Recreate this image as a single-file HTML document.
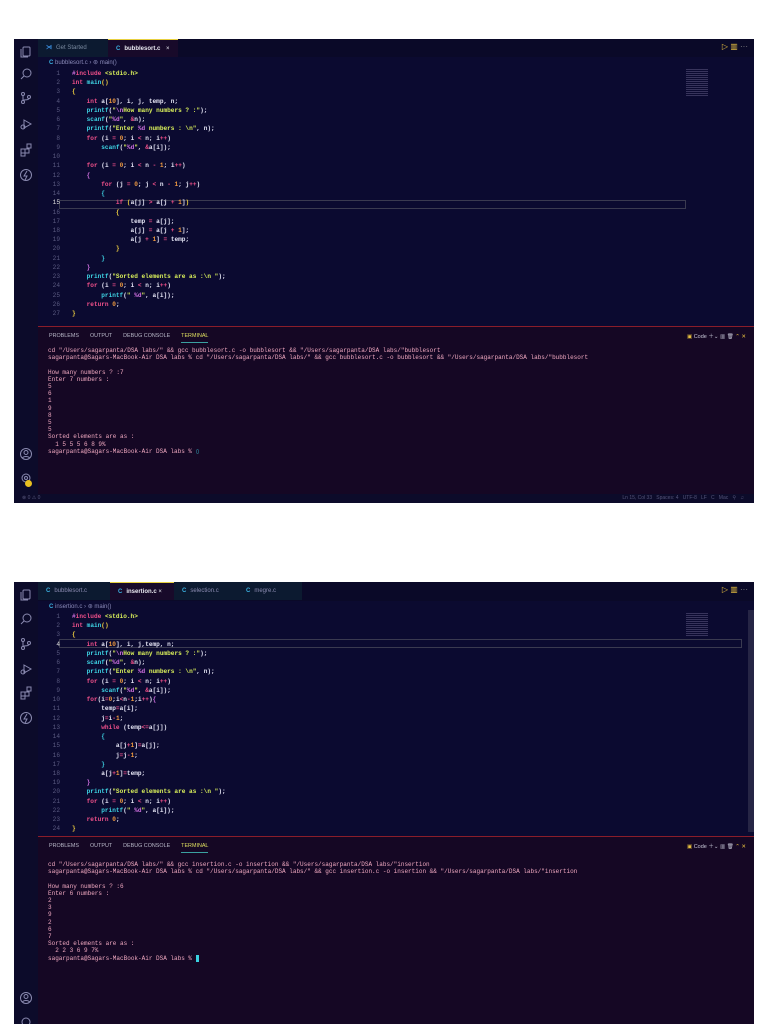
<!DOCTYPE html>
<html><head><meta charset="utf-8"><style>
*{margin:0;padding:0;box-sizing:border-box}
body{width:768px;height:1024px;background:#fff;position:relative;overflow:hidden;font-family:"Liberation Sans",sans-serif}
.win{position:absolute;left:14px;width:740px;background:#0b0a30;overflow:hidden}
.act{position:absolute;left:0;top:0;width:24px;bottom:0;background:#0c0b2a}
.act svg{position:absolute;left:5px}
.tabs{position:absolute;left:24px;right:0;top:0;height:18px;background:#0a0928}
.tab{position:absolute;top:0;height:18px;font-size:6px;color:#8a8ab0;line-height:18px;padding-left:8px}
.tab b{color:#3ab0e0;font-weight:bold;margin-right:4px}
.crumb{position:absolute;left:35px;font-size:6px;color:#8a8ab8}
pre{font-family:"Liberation Mono",monospace;font-size:6.1px;position:absolute;white-space:pre}
.ln{color:#5a5a80;text-align:right;width:22px;left:24px;line-height:9.23px}
.code{left:58px;color:#e4e4f4;line-height:9.23px;font-weight:bold}
.k{color:#f0508a}.f{color:#3ed4e4}.s{color:#d8ee5a}.n{color:#f09a40}.y{color:#f0d040}.p{color:#d070e0}
.term{position:absolute;left:24px;right:0;background:#150724;border-top:1.5px solid #8a1d2a}
.ttabs{position:absolute;left:11px;top:6px;font-size:5.4px;color:#b8b8c8}
.ttabs span{margin-right:11px}
.tt{color:#e0e060;border-bottom:1px solid #3aa0a0;padding-bottom:3px}
.tout{left:10px;color:#f0a8c0;font-size:6px;line-height:7.2px}
.tr{position:absolute;right:8px;top:5px;font-size:5.5px;color:#c8c8d8}
.status{position:absolute;left:0;right:0;height:9px;background:#0c0b2a;font-size:5px;color:#55557a;line-height:9px}
</style></head><body>

<!-- Window 1 -->
<div class="win" style="top:39px;height:464px">
 <div class="act">
  <svg style="top:6px" width="14" height="14" viewBox="0 0 14 14" fill="none" stroke="#8a8ab0" stroke-width="1"><rect x="4" y="2" width="7" height="9" rx="1"/><path d="M2 4v8h7"/></svg>
  <svg style="top:28px" width="14" height="14" viewBox="0 0 14 14" fill="none" stroke="#8a8ab0" stroke-width="1"><circle cx="8" cy="6" r="4"/><path d="M5 9l-3 3"/></svg>
  <svg style="top:52px" width="14" height="14" viewBox="0 0 14 14" fill="none" stroke="#8a8ab0" stroke-width="1"><circle cx="4" cy="3" r="1.5"/><circle cx="4" cy="11" r="1.5"/><circle cx="10" cy="6" r="1.5"/><path d="M4 4.5v5M10 7.5c0 2-6 1-6 2"/></svg>
  <svg style="top:78px" width="14" height="14" viewBox="0 0 14 14" fill="none" stroke="#8a8ab0" stroke-width="1"><path d="M5 3l7 4-7 4z"/><circle cx="4" cy="10" r="2"/></svg>
  <svg style="top:104px" width="14" height="14" viewBox="0 0 14 14" fill="none" stroke="#8a8ab0" stroke-width="1"><rect x="2" y="6" width="4" height="4"/><rect x="6" y="6" width="4" height="4"/><rect x="2" y="10" width="4" height="3"/><rect x="8" y="1" width="4" height="4"/></svg>
  <svg style="top:129px" width="14" height="14" viewBox="0 0 14 14" fill="none" stroke="#8a8ab0" stroke-width="1"><circle cx="7" cy="7" r="5.5"/><path d="M8 3L5 8h3l-2 4"/></svg>
  <svg style="top:408px" width="14" height="14" viewBox="0 0 14 14" fill="none" stroke="#8a8ab0" stroke-width="1"><circle cx="7" cy="7" r="5.5"/><circle cx="7" cy="5.5" r="2"/><path d="M3.5 11c1-2 6-2 7 0"/></svg>
  <svg style="top:432px" width="14" height="14" viewBox="0 0 14 14" fill="none" stroke="#8a8ab0" stroke-width="1"><circle cx="7" cy="7" r="4"/><circle cx="7" cy="7" r="1.5"/></svg>
  <div style="position:absolute;left:11px;top:441px;width:7px;height:7px;border-radius:50%;background:#e8c020"></div>
 </div>
 <div class="tabs">
  <div class="tab" style="left:0;width:70px;background:#0c1a30;color:#7a8aa0"><b style="color:#3a8ee0">⋊</b>Get Started</div>
  <div class="tab" style="left:70px;width:70px;background:#180a2a;color:#e8e8f0;border-top:1px solid #e8d040"><b>C</b><span style="font-weight:bold">bubblesort.c</span> <span style="margin-left:4px">×</span></div>
  <div style="position:absolute;right:6px;top:3px;font-size:8px;color:#e8c040">▷ ▥ <span style="color:#888">···</span></div>
 </div>
 <div class="crumb" style="top:20px"><b style="color:#3ab0e0">C</b> bubblesort.c › ⊛ main()</div>
 <div style="position:absolute;left:672px;top:29px;width:22px;height:28px;background:repeating-linear-gradient(#0b0a30 0 1px,#55507a 1px 2px);opacity:.6"></div>
 <div style="position:absolute;left:45px;right:68px;top:161px;height:9px;border:1px solid #3a3a50"></div>
<pre class="ln" style="top:30px">1
2
3
4
5
6
7
8
9
10
11
12
13
14
<span style="color:#ddd">15</span>
16
17
18
19
20
21
22
23
24
25
26
27</pre>
<pre class="code" style="top:30px"><span class="p">#</span><span class="k">include</span> <span class="s">&lt;stdio.h&gt;</span>
<span class="k">int</span> <span class="f">main</span><span class="y">()</span>
<span class="y">{</span>
    <span class="k">int</span> a[<span class="n">10</span>], i, j, temp, n;
    <span class="f">printf</span>(<span class="s">"</span><span class="p">\n</span><span class="s">How many numbers ? :"</span>);
    <span class="f">scanf</span>(<span class="s">"</span><span class="p">%d</span><span class="s">"</span>, <span class="k">&amp;</span>n);
    <span class="f">printf</span>(<span class="s">"Enter </span><span class="p">%d</span><span class="s"> numbers : \n"</span>, n);
    <span class="k">for</span> (i <span class="k">=</span> <span class="n">0</span>; i <span class="k">&lt;</span> n; i<span class="k">++</span>)
        <span class="f">scanf</span>(<span class="s">"</span><span class="p">%d</span><span class="s">"</span>, <span class="k">&amp;</span>a[i]);

    <span class="k">for</span> (i <span class="k">=</span> <span class="n">0</span>; i <span class="k">&lt;</span> n <span class="k">-</span> <span class="n">1</span>; i<span class="k">++</span>)
    <span class="p">{</span>
        <span class="k">for</span> (j <span class="k">=</span> <span class="n">0</span>; j <span class="k">&lt;</span> n <span class="k">-</span> <span class="n">1</span>; j<span class="k">++</span>)
        <span class="f">{</span>
            <span class="k">if</span> <span class="y">(</span>a[j] <span class="k">&gt;</span> a[j <span class="k">+</span> <span class="n">1</span>]<span class="y">)</span>
            <span class="y">{</span>
                temp <span class="k">=</span> a[j];
                a[j] <span class="k">=</span> a[j <span class="k">+</span> <span class="n">1</span>];
                a[j <span class="k">+</span> <span class="n">1</span>] <span class="k">=</span> temp;
            <span class="y">}</span>
        <span class="f">}</span>
    <span class="p">}</span>
    <span class="f">printf</span>(<span class="s">"Sorted elements are as :\n "</span>);
    <span class="k">for</span> (i <span class="k">=</span> <span class="n">0</span>; i <span class="k">&lt;</span> n; i<span class="k">++</span>)
        <span class="f">printf</span>(<span class="s">" </span><span class="p">%d</span><span class="s">"</span>, a[i]);
    <span class="k">return</span> <span class="n">0</span>;
<span class="y">}</span></pre>
 <div class="term" style="top:287px;bottom:9px">
  <div class="ttabs"><span>PROBLEMS</span><span>OUTPUT</span><span>DEBUG CONSOLE</span><span class="tt">TERMINAL</span></div>
  <div class="tr"><span style="color:#e8c040">▣</span> Code ＋⌄ ▥ 🗑 <span style="color:#e8c040">⌃ ✕</span></div>
<pre class="tout" style="top:20px">cd "/Users/sagarpanta/DSA labs/" &amp;&amp; gcc bubblesort.c -o bubblesort &amp;&amp; "/Users/sagarpanta/DSA labs/"bubblesort
sagarpanta@Sagars-MacBook-Air DSA labs % cd "/Users/sagarpanta/DSA labs/" &amp;&amp; gcc bubblesort.c -o bubblesort &amp;&amp; "/Users/sagarpanta/DSA labs/"bubblesort

How many numbers ? :7
Enter 7 numbers :
5
6
1
9
8
5
5
Sorted elements are as :
  1 5 5 5 6 8 9%
sagarpanta@Sagars-MacBook-Air DSA labs % <span style="color:#3ad0e0">▯</span></pre>
 </div>
 <div class="status" style="bottom:0"><span style="margin-left:8px">⊗ 0 ⚠ 0</span><span style="position:absolute;right:10px">Ln 15, Col 33 &nbsp; Spaces: 4 &nbsp; UTF-8 &nbsp; LF &nbsp; C &nbsp; Mac &nbsp; ⚲ &nbsp; ♫</span></div>
</div>

<!-- Window 2 -->
<div class="win" style="top:582px;height:442px">
 <div class="act">
  <svg style="top:6px" width="14" height="14" viewBox="0 0 14 14" fill="none" stroke="#8a8ab0" stroke-width="1"><rect x="4" y="2" width="7" height="9" rx="1"/><path d="M2 4v8h7"/></svg>
  <svg style="top:30px" width="14" height="14" viewBox="0 0 14 14" fill="none" stroke="#8a8ab0" stroke-width="1"><circle cx="8" cy="6" r="4"/><path d="M5 9l-3 3"/></svg>
  <svg style="top:55px" width="14" height="14" viewBox="0 0 14 14" fill="none" stroke="#8a8ab0" stroke-width="1"><circle cx="4" cy="3" r="1.5"/><circle cx="4" cy="11" r="1.5"/><circle cx="10" cy="6" r="1.5"/><path d="M4 4.5v5M10 7.5c0 2-6 1-6 2"/></svg>
  <svg style="top:80px" width="14" height="14" viewBox="0 0 14 14" fill="none" stroke="#8a8ab0" stroke-width="1"><path d="M5 3l7 4-7 4z"/><circle cx="4" cy="10" r="2"/></svg>
  <svg style="top:104px" width="14" height="14" viewBox="0 0 14 14" fill="none" stroke="#8a8ab0" stroke-width="1"><rect x="2" y="6" width="4" height="4"/><rect x="6" y="6" width="4" height="4"/><rect x="2" y="10" width="4" height="3"/><rect x="8" y="1" width="4" height="4"/></svg>
  <svg style="top:129px" width="14" height="14" viewBox="0 0 14 14" fill="none" stroke="#8a8ab0" stroke-width="1"><circle cx="7" cy="7" r="5.5"/><path d="M8 3L5 8h3l-2 4"/></svg>
  <svg style="top:409px" width="14" height="14" viewBox="0 0 14 14" fill="none" stroke="#8a8ab0" stroke-width="1"><circle cx="7" cy="7" r="5.5"/><circle cx="7" cy="5.5" r="2"/><path d="M3.5 11c1-2 6-2 7 0"/></svg>
  <svg style="top:433px" width="14" height="14" viewBox="0 0 14 14" fill="none" stroke="#8a8ab0" stroke-width="1"><circle cx="7" cy="7" r="4"/></svg>
 </div>
 <div class="tabs" style="height:19px">
  <div class="tab" style="left:0;width:72px;background:#0c1a30"><b>C</b>bubblesort.c</div>
  <div class="tab" style="left:72px;width:64px;background:#180a2a;color:#e8e8f0;border-top:1px solid #e8d040"><b>C</b><span style="font-weight:bold">insertion.c</span> ×</div>
  <div class="tab" style="left:136px;width:64px;background:#0c1a30"><b>C</b>selection.c</div>
  <div class="tab" style="left:200px;width:64px;background:#0c1a30"><b>C</b>megre.c</div>
  <div style="position:absolute;right:6px;top:3px;font-size:8px;color:#e8c040">▷ ▥ <span style="color:#888">···</span></div>
 </div>
 <div class="crumb" style="top:21px"><b style="color:#3ab0e0">C</b> insertion.c › ⊛ main()</div>
 <div style="position:absolute;left:672px;top:30px;width:22px;height:24px;background:repeating-linear-gradient(#0b0a30 0 1px,#55507a 1px 2px);opacity:.6"></div>
 <div style="position:absolute;left:734px;top:28px;width:6px;height:222px;background:#262545"></div>
 <div style="position:absolute;left:45px;right:12px;top:57px;height:9px;border:1px solid #3a3a50"></div>
<pre class="ln" style="top:30px">1
2
3
<span style="color:#ddd">4</span>
5
6
7
8
9
10
11
12
13
14
15
16
17
18
19
20
21
22
23
24</pre>
<pre class="code" style="top:30px"><span class="p">#</span><span class="k">include</span> <span class="s">&lt;stdio.h&gt;</span>
<span class="k">int</span> <span class="f">main</span><span class="y">()</span>
<span class="y">{</span>
    <span class="k">int</span> a[<span class="n">10</span>], i, j,temp, n;
    <span class="f">printf</span>(<span class="s">"</span><span class="p">\n</span><span class="s">How many numbers ? :"</span>);
    <span class="f">scanf</span>(<span class="s">"</span><span class="p">%d</span><span class="s">"</span>, <span class="k">&amp;</span>n);
    <span class="f">printf</span>(<span class="s">"Enter </span><span class="p">%d</span><span class="s"> numbers : \n"</span>, n);
    <span class="k">for</span> (i <span class="k">=</span> <span class="n">0</span>; i <span class="k">&lt;</span> n; i<span class="k">++</span>)
        <span class="f">scanf</span>(<span class="s">"</span><span class="p">%d</span><span class="s">"</span>, <span class="k">&amp;</span>a[i]);
    <span class="k">for</span>(i<span class="k">=</span><span class="n">0</span>;i<span class="k">&lt;</span>n<span class="k">-</span><span class="n">1</span>;i<span class="k">++</span>)<span class="p">{</span>
        temp<span class="k">=</span>a[i];
        j<span class="k">=</span>i<span class="k">-</span><span class="n">1</span>;
        <span class="k">while</span> (temp<span class="k">&lt;=</span>a[j])
        <span class="f">{</span>
            a[j<span class="k">+</span><span class="n">1</span>]<span class="k">=</span>a[j];
            j<span class="k">=</span>j<span class="k">-</span><span class="n">1</span>;
        <span class="f">}</span>
        a[j<span class="k">+</span><span class="n">1</span>]<span class="k">=</span>temp;
    <span class="p">}</span>
    <span class="f">printf</span>(<span class="s">"Sorted elements are as :\n "</span>);
    <span class="k">for</span> (i <span class="k">=</span> <span class="n">0</span>; i <span class="k">&lt;</span> n; i<span class="k">++</span>)
        <span class="f">printf</span>(<span class="s">" </span><span class="p">%d</span><span class="s">"</span>, a[i]);
    <span class="k">return</span> <span class="n">0</span>;
<span class="y">}</span></pre>
 <div class="term" style="top:254px;bottom:0">
  <div class="ttabs"><span>PROBLEMS</span><span>OUTPUT</span><span>DEBUG CONSOLE</span><span class="tt">TERMINAL</span></div>
  <div class="tr"><span style="color:#e8c040">▣</span> Code ＋⌄ ▥ 🗑 <span style="color:#e8c040">⌃ ✕</span></div>
<pre class="tout" style="top:24px">cd "/Users/sagarpanta/DSA labs/" &amp;&amp; gcc insertion.c -o insertion &amp;&amp; "/Users/sagarpanta/DSA labs/"insertion
sagarpanta@Sagars-MacBook-Air DSA labs % cd "/Users/sagarpanta/DSA labs/" &amp;&amp; gcc insertion.c -o insertion &amp;&amp; "/Users/sagarpanta/DSA labs/"insertion

How many numbers ? :6
Enter 6 numbers :
2
3
9
2
6
7
Sorted elements are as :
  2 2 3 6 9 7%
sagarpanta@Sagars-MacBook-Air DSA labs % <span style="background:#3ad0e0"> </span></pre>
 </div>
</div>
</body></html>
